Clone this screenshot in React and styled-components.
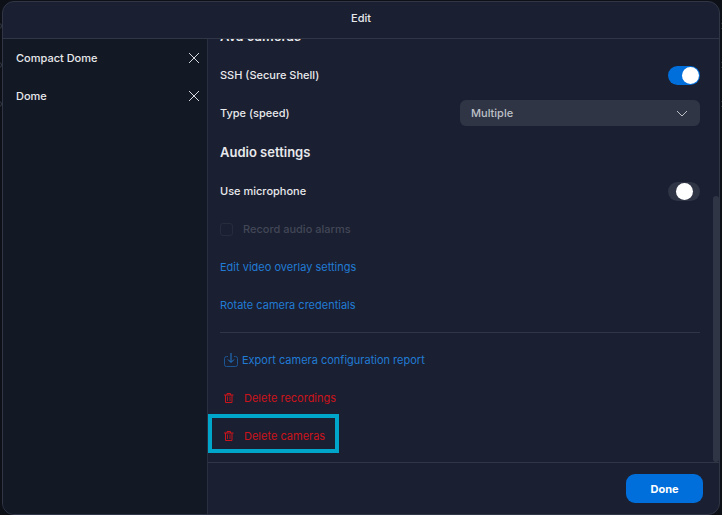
import React from "react";
import styled, { createGlobalStyle } from "styled-components";

const GlobalStyle = createGlobalStyle`
  * {
    box-sizing: border-box;
  }
  body {
    margin: 0;
    background: #0d1017;
    color: #e8e9ec;
    font-family: Inter, "Liberation Sans", sans-serif;
    font-size: 11px;
    line-height: 16px;
    font-weight: 500;
  }
  button, select, input {
    font: inherit;
  }
`;

const Page = styled.div`
  height: 100vh;
  padding: 1px 2px 0;
  position: relative;
`;
const Behind = styled.div`
  position: absolute;
  top: 23px;
  left: -4px;
  right: -2px;
  display: flex;
  flex-direction: column;
  gap: 33px;
`;
const BehindRow = styled.div`
  display: flex;
  justify-content: space-between;
`;
const Ring = styled.i`
  width: 6px;
  height: 6px;
  border: 1px solid #343943;
  border-radius: 50%;
`;
const Dots = styled.i`
  width: 3px;
  height: 6px;
  border: solid #262b36;
  border-width: 1px 0;
`;
const Dialog = styled.section`
  position: relative;
  height: 100%;
  display: flex;
  flex-direction: column;
  background: #1a1f31;
  border: 1px solid #303646;
  border-radius: 12px;
  overflow: hidden;
`;
const Header = styled.header`
  flex: none;
  padding: 8px 0 12px;
  border-bottom: 1px solid #303646;
  text-align: center;
`;
const Title = styled.h1`
  margin: 0;
  font-size: 11px;
  font-weight: 500;
`;
const Main = styled.div`
  flex: 1;
  min-height: 0;
  display: flex;
`;
const Sidebar = styled.ul`
  flex: none;
  width: 205px;
  margin: 0;
  padding: 0 7px 0 13px;
  list-style: none;
  background: #121824;
  border-right: 1px solid #2a2f3f;
`;
const Camera = styled.li`
  height: 38px;
  display: flex;
  align-items: center;
  justify-content: space-between;
`;
const RemoveButton = styled.button`
  display: flex;
  padding: 0;
  border: 0;
  background: none;
  color: #d5d7dc;
  cursor: pointer;
`;
const Panel = styled.div`
  flex: 1;
  min-width: 0;
  display: flex;
  flex-direction: column;
`;
const Body = styled.div`
  flex: 1;
  min-height: 0;
  display: flex;
`;
const Scroller = styled.div`
  flex: 1;
  min-width: 0;
  padding: 0 13px 0 12px;
  display: flex;
  flex-direction: column-reverse;
  overflow-y: auto;
  scrollbar-width: none;
`;
const Track = styled.div`
  flex: none;
  width: 6px;
  display: flex;
  align-items: flex-end;
`;
const Thumb = styled.div`
  width: 100%;
  height: 63%;
  border-radius: 3px;
  background: #303546;
`;
const Settings = styled.div`
  padding-bottom: 7px;
`;
const Row = styled.div`
  height: 38px;
  display: flex;
  align-items: center;
  justify-content: space-between;
`;
const Heading = styled.h2`
  margin: 0;
  padding: 12px 0;
  font-size: 13px;
  line-height: 16px;
  font-weight: 600;
`;
const Switch = styled.input`
  appearance: none;
  width: 32px;
  height: 19px;
  margin: 0;
  padding: 1px;
  display: flex;
  justify-content: ${(props) => (props.checked ? "flex-end" : "center")};
  border-radius: 10px;
  background: ${(props) => (props.checked ? "#006fdc" : "#303546")};
  cursor: pointer;

  &::before {
    content: "";
    width: 17px;
    height: 17px;
    border-radius: 50%;
    background: #fff;
  }
`;
const SelectWrap = styled.div`
  position: relative;
  width: 240px;
`;
const Select = styled.select`
  appearance: none;
  width: 100%;
  height: 26px;
  padding: 0 32px 0 11px;
  border: 0;
  border-radius: 6px;
  background: #303546;
  color: #bdc0c7;
`;
const Chevron = styled.svg`
  position: absolute;
  top: 10px;
  right: 12px;
  pointer-events: none;
`;
const CheckLabel = styled.label`
  display: flex;
  align-items: center;
  gap: 10px;
  color: #424757;
`;
const Checkbox = styled.input`
  appearance: none;
  width: 13px;
  height: 13px;
  margin: 0;
  border: 1px solid #272c3d;
  border-radius: 3px;
`;
const Link = styled.a`
  color: #217bd4;
  font-weight: 400;
  text-decoration: none;
`;
const Divider = styled.hr`
  margin: 8px 0;
  border: 0;
  border-top: 1px solid #303646;
`;
const Action = styled.button`
  height: 38px;
  padding: 0 9px 0 12px;
  margin-left: -8px;
  display: flex;
  align-items: center;
  gap: ${(props) => (props.$danger ? "10px" : "4px")};
  border: 0;
  background: none;
  color: ${(props) => (props.$danger ? "#cc141c" : "#217bd4")};
  font-weight: 400;
  cursor: pointer;
`;
const Highlighted = styled.div`
  position: relative;
`;
const Highlight = styled.div`
  position: absolute;
  inset: -3px auto 2px -12px;
  width: 131px;
  border: 4px solid #00a6ca;
  pointer-events: none;
`;
const Footer = styled.footer`
  flex: none;
  padding: 11px 16px;
  border-top: 1px solid #303646;
  display: flex;
  justify-content: flex-end;
`;
const DoneButton = styled.button`
  width: 77px;
  height: 29px;
  border: 0;
  border-radius: 9px;
  background: #006fdc;
  color: #fff;
  font-weight: 700;
  cursor: pointer;
`;

function CloseIcon() {
  return (
    <svg width="12" height="12" viewBox="0 0 12 12" fill="none" stroke="currentColor">
      <path d="M1 1l10 10M11 1L1 11" />
    </svg>
  );
}

function ExportIcon() {
  return (
    <svg width="14" height="14" viewBox="0 0 14 14" fill="none" stroke="#1c5594">
      <path d="M4 3.5H2.5a2 2 0 0 0-2 2v6a2 2 0 0 0 2 2h9a2 2 0 0 0 2-2v-6a2 2 0 0 0-2-2H10" />
      <path d="M7 0v9M4 6.5l3 3 3-3" stroke="#217bd4" />
    </svg>
  );
}

function TrashIcon() {
  return (
    <svg width="10" height="10" viewBox="0 0 10 10" fill="none" stroke="currentColor">
      <path d="M0 2h9.5M3 2V.5h3.5V2M1.5 2v7.5h6.5V2" />
      <path d="M3.5 3.5V8M6 3.5V8" strokeOpacity="0.8" />
    </svg>
  );
}

const cameras = ["Compact Dome", "Dome"];

function App() {
  const [ssh, setSsh] = React.useState(true);
  const [mic, setMic] = React.useState(false);

  return (
    <Page>
      <GlobalStyle />
      <Behind aria-hidden="true">
        <BehindRow><Ring /><Dots /></BehindRow>
        <BehindRow><Ring /><Dots /></BehindRow>
        <BehindRow><Ring /><Dots /></BehindRow>
      </Behind>
      <Dialog role="dialog" aria-labelledby="title">
        <Header>
          <Title id="title">Edit</Title>
        </Header>
        <Main>
          <Sidebar>
            {cameras.map((name) => (
              <Camera key={name}>
                {name}
                <RemoveButton aria-label={`Remove ${name}`}>
                  <CloseIcon />
                </RemoveButton>
              </Camera>
            ))}
          </Sidebar>
          <Panel>
            <Body>
              <Scroller>
                <Settings>
                  <Heading>Ava cameras</Heading>
                  <Row>
                    <label htmlFor="ssh">SSH (Secure Shell)</label>
                    <Switch id="ssh" type="checkbox" role="switch" checked={ssh} onChange={() => setSsh(!ssh)} />
                  </Row>
                  <Row>
                    <label htmlFor="speed">Type (speed)</label>
                    <SelectWrap>
                      <Select id="speed">
                        <option>Multiple</option>
                      </Select>
                      <Chevron width="12" height="7" viewBox="0 0 12 7" fill="none" stroke="#bdc0c7">
                        <path d="M1 1l5 5 5-5" />
                      </Chevron>
                    </SelectWrap>
                  </Row>
                  <Heading>Audio settings</Heading>
                  <Row>
                    <label htmlFor="mic">Use microphone</label>
                    <Switch id="mic" type="checkbox" role="switch" checked={mic} onChange={() => setMic(!mic)} />
                  </Row>
                  <Row>
                    <CheckLabel>
                      <Checkbox type="checkbox" disabled />
                      Record audio alarms
                    </CheckLabel>
                  </Row>
                  <Row>
                    <Link href="#overlay">Edit video overlay settings</Link>
                  </Row>
                  <Row>
                    <Link href="#credentials">Rotate camera credentials</Link>
                  </Row>
                  <Divider />
                  <Action>
                    <ExportIcon />
                    Export camera configuration report
                  </Action>
                  <Action $danger>
                    <TrashIcon />
                    Delete recordings
                  </Action>
                  <Highlighted>
                    <Action $danger>
                      <TrashIcon />
                      Delete cameras
                    </Action>
                    <Highlight />
                  </Highlighted>
                </Settings>
              </Scroller>
              <Track>
                <Thumb />
              </Track>
            </Body>
            <Footer>
              <DoneButton>Done</DoneButton>
            </Footer>
          </Panel>
        </Main>
      </Dialog>
    </Page>
  );
}

export default App;
